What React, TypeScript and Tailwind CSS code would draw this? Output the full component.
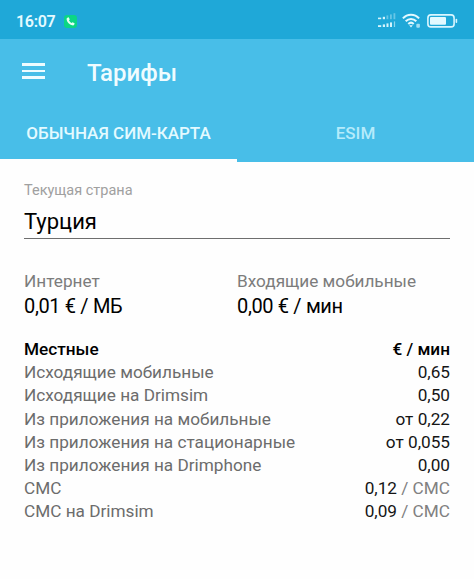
import { useState } from 'react';
import clsx from 'clsx';

interface Rate {
  label: string;
  value: string;
  unit?: string;
}

const tabs = ['ОБЫЧНАЯ СИМ-КАРТА', 'ESIM'];

const rates: Rate[] = [
  { label: 'Исходящие мобильные', value: '0,65' },
  { label: 'Исходящие на Drimsim', value: '0,50' },
  { label: 'Из приложения на мобильные', value: 'от 0,22' },
  { label: 'Из приложения на стационарные', value: 'от 0,055' },
  { label: 'Из приложения на Drimphone', value: '0,00' },
  { label: 'СМС', value: '0,12', unit: '/ СМС' },
  { label: 'СМС на Drimsim', value: '0,09', unit: '/ СМС' },
];

function CallBadge() {
  return (
    <svg className="ml-[9px] h-[13px] w-[13px]" viewBox="0 0 12 12">
      <rect width="12" height="12" rx="3" fill="#0bd684" />
      <path
        d="M3.2 2.5 4.4 2.1 5.3 4.1 4.6 4.9C5 6 5.9 6.9 7 7.3L7.8 6.6 9.8 7.5 9.5 8.8C9.2 9.6 8.3 9.8 7.4 9.5 4.9 8.8 3 6.8 2.5 4.5 2.3 3.6 2.5 2.8 3.2 2.5Z"
        fill="#e4fff2"
      />
    </svg>
  );
}

function SignalIcon() {
  return (
    <svg className="h-4 w-[18px]" viewBox="0 0 18 16" fill="#d5f4fc">
      <rect x="0" y="4.6" width="3.2" height="1.6" />
      <rect x="4.8" y="3.8" width="2.2" height="2.4" />
      <g opacity="0.4">
        <rect x="8.5" y="2.4" width="1.8" height="3.8" />
        <rect x="12" y="1.4" width="1.8" height="4.8" />
        <rect x="15.5" y="0.2" width="1.8" height="6" />
      </g>
      <rect x="0" y="12.2" width="3.2" height="1.8" />
      <rect x="4.8" y="11.4" width="2.2" height="2.6" />
      <rect x="8.5" y="10.4" width="2" height="3.6" />
      <rect x="12" y="9.4" width="2" height="4.6" />
      <rect x="15.9" y="8.4" width="1.2" height="5.6" opacity="0.6" />
    </svg>
  );
}

function WifiIcon() {
  return (
    <svg className="ml-[6px] h-4 w-5" viewBox="0 0 20 16" fill="none" stroke="#e2f9ff" strokeWidth="2">
      <path d="M.9 5.4C5.3.5 12.7.5 17.1 5.4" />
      <path d="M3.7 8.3C6.7 5.1 11.3 5.1 14.3 8.3" />
      <path d="M6.3 11C8 9.3 10 9.3 11.7 11" />
      <path d="M7.2 12.2h3.6L9 14.4Z" fill="#e2f9ff" stroke="none" />
      <rect x="14.3" y="10.8" width="3.6" height="4" rx="1" fill="#9fdff4" stroke="none" />
    </svg>
  );
}

function BatteryIcon() {
  return (
    <svg className="ml-[5px] h-[14px] w-[31px]" viewBox="0 0 31 14">
      <rect x="0.9" y="0.9" width="26.2" height="12" rx="3" fill="none" stroke="#d9f6ff" strokeWidth="1.6" />
      <rect x="3" y="3" width="16" height="7.8" rx="1" fill="#e2f9ff" />
      <rect x="28.6" y="4.7" width="1.6" height="4.4" rx="0.8" fill="#d9f6ff" />
    </svg>
  );
}

function StatusBar() {
  return (
    <div className="flex h-[39px] items-center bg-[#1fa8d8] pt-[3px] pr-[16px] pl-[16px]">
      <span className="pt-[2px] text-[16px] leading-none font-semibold tracking-[-0.3px] text-[#e4faff]">16:07</span>
      <CallBadge />
      <div className="ml-auto flex items-center">
        <SignalIcon />
        <WifiIcon />
        <BatteryIcon />
      </div>
    </div>
  );
}

export default function App() {
  const [active, setActive] = useState(0);

  return (
    <div className="min-h-screen bg-[#fefefe] font-['Roboto','Noto_Sans',sans-serif] text-black">
      <StatusBar />

      <header className="flex h-[123px] flex-col bg-[#48bee8]">
        <div className="flex h-[66px] items-center pl-[22px]">
          <button className="mb-[2px] flex w-[23px] flex-col gap-[4px]" aria-label="Меню">
            <span className="h-[2.5px] bg-[#eefcff]" />
            <span className="h-[2.5px] bg-[#eefcff]" />
            <span className="h-[2.5px] bg-[#eefcff]" />
          </button>
          <h1 className="ml-[42px] pt-px text-[24px] leading-none font-medium text-[#f0fcff]">Тарифы</h1>
        </div>

        <nav className="grid flex-1 grid-cols-2">
          {tabs.map((tab, i) => (
            <button
              key={tab}
              onClick={() => setActive(i)}
              className={clsx(
                'border-b-[3px] pt-[3px] text-[17px] font-medium whitespace-nowrap',
                active === i ? 'border-[#fefefe] text-[#e4faff]' : 'border-transparent text-[#b5ebfb]'
              )}
            >
              {tab}
            </button>
          ))}
        </nav>
      </header>

      <main className="pr-[24px] pl-[24px]">
        <div className="border-b border-[#6e6e6e] pt-[20px] pb-[3px]">
          <p className="text-[14.5px] leading-[18px] text-[#a0a0a0]">Текущая страна</p>
          <p className="mt-[8px] text-[22px] leading-[27px]">Турция</p>
        </div>

        <div className="mt-[30px] grid grid-cols-2">
          <div>
            <p className="text-[17.2px] leading-[24px] text-[#7c7c7c]">Интернет</p>
            <p className="text-[20px] leading-[26px] tracking-[-0.35px]">0,01 € / МБ</p>
          </div>
          <div>
            <p className="text-[17.2px] leading-[24px] text-[#7c7c7c]">Входящие мобильные</p>
            <p className="text-[20px] leading-[26px] tracking-[-0.35px]">0,00 € / мин</p>
          </div>
        </div>

        <div className="mt-[19px] text-[17.2px] leading-[23.2px]">
          <div className="flex justify-between font-medium">
            <span>Местные</span>
            <span>€ / мин</span>
          </div>
          {rates.map(rate => (
            <div key={rate.label} className="flex justify-between">
              <span className="text-[#6c6c6c]">{rate.label}</span>
              <span className="text-[#151515]">
                {rate.value}
                {rate.unit && <span className="text-[#808080]"> {rate.unit}</span>}
              </span>
            </div>
          ))}
        </div>
      </main>
    </div>
  );
}
